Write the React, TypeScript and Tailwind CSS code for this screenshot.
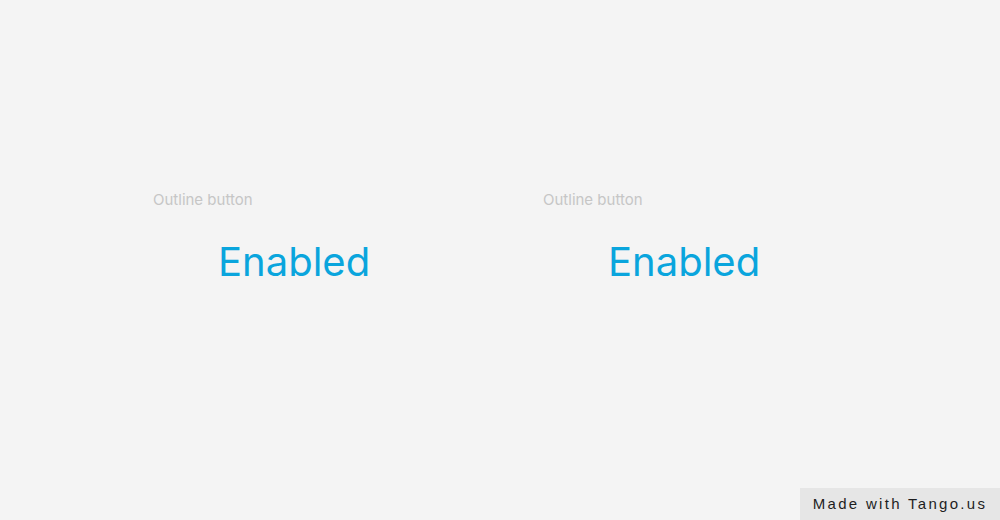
export default function App() {
  return (
    <div className="w-[1000px] h-[520px] bg-[#f4f4f4] flex flex-col relative overflow-hidden" style={{ fontFamily: "Inter, 'Noto Sans', sans-serif" }}>
      <div className="flex pt-[190px] pl-[153px]">
        <div className="w-[390px] flex flex-col">
          <div className="text-[15px] leading-[20px] text-[#c6c6c6]">Outline button</div>
          <div className="pl-[65px] mt-[28px] text-[40px] leading-[48px] text-[#0aa5dd]">Enabled</div>
        </div>
        <div className="w-[390px] flex flex-col">
          <div className="text-[15px] leading-[20px] text-[#c6c6c6]">Outline button</div>
          <div className="pl-[65px] mt-[28px] text-[40px] leading-[48px] text-[#0aa5dd]">Enabled</div>
        </div>
      </div>
      <div className="absolute right-0 bottom-0 w-[200px] h-[32px] bg-[#e6e6e6] flex items-center justify-center text-[15px] tracking-[2.3px] text-[#1e1e1e]" style={{ fontFamily: "'Liberation Sans', sans-serif" }}>
        Made with Tango.us
      </div>
    </div>
  );
}
